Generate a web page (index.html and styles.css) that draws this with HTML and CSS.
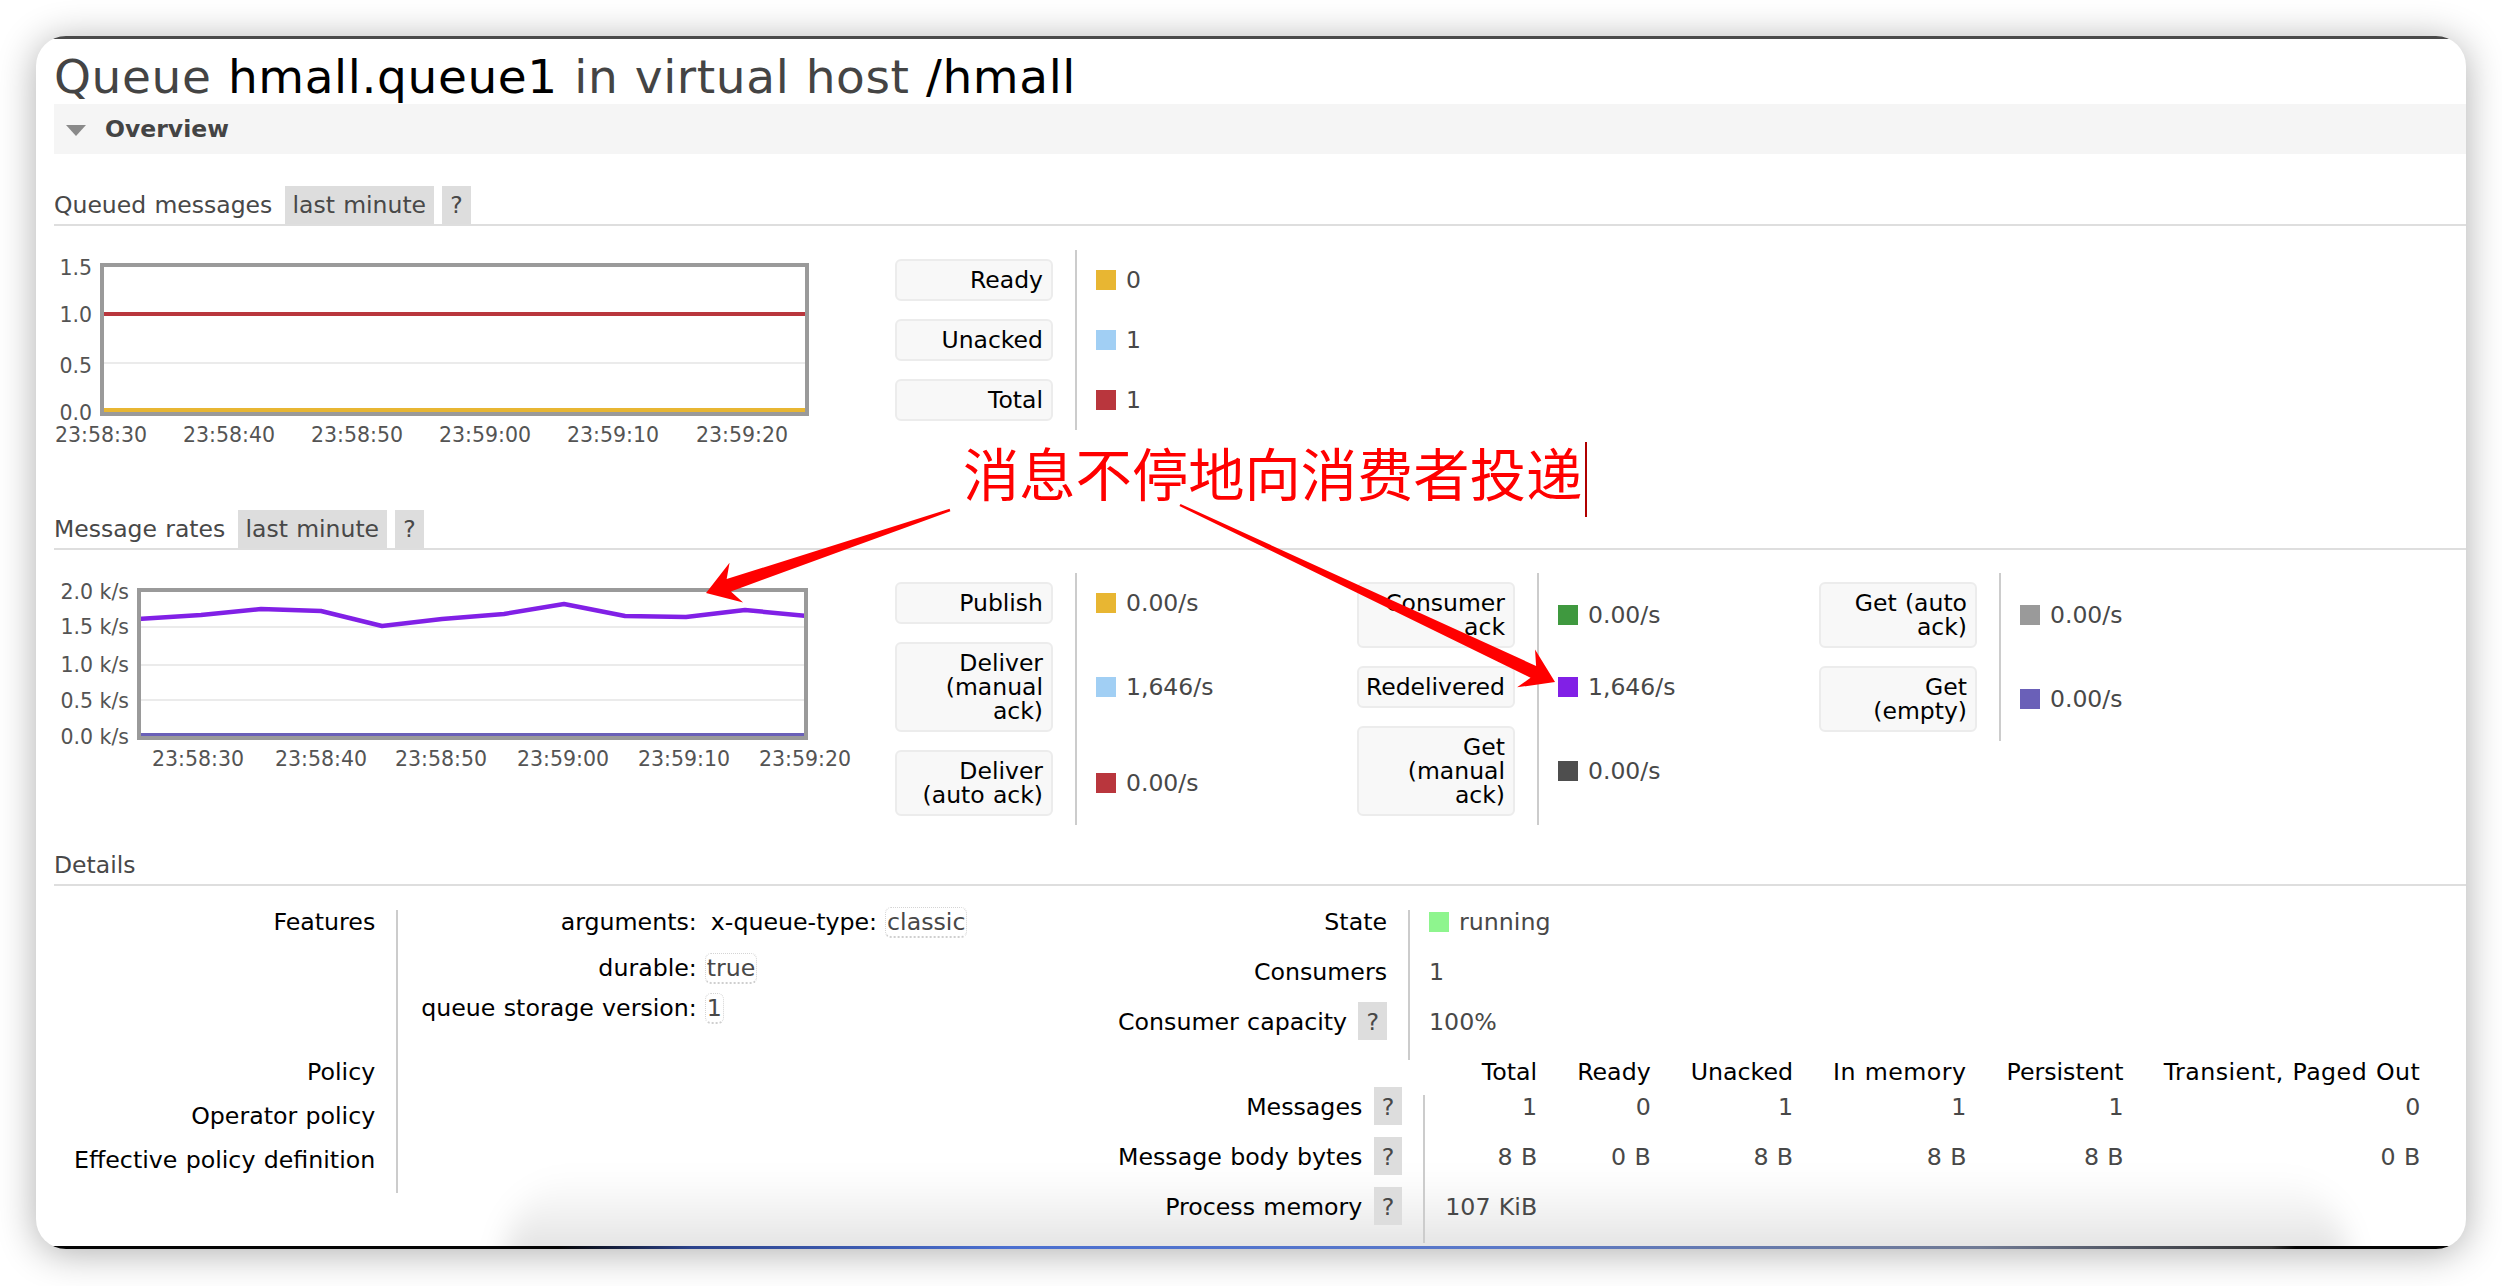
FILE: index.html
```html
<!DOCTYPE html>
<html>
<head>
<meta charset="utf-8">
<title>Queue hmall.queue1</title>
<link rel="stylesheet" href="styles.css">
</head>
<body>
<div class="window">
  <div class="blob"></div>
  <div class="win-top"></div>
  <div class="content">
    <h1>Queue <b>hmall.queue1</b> in virtual host <b>/hmall</b></h1>
    <div class="section-bar"><span class="tri"></span><span class="bar-title">Overview</span></div>

    <div class="chart-head head1">Queued messages <span class="opt">last minute</span> <span class="hq">?</span></div>
    <div class="chart-row row1">
      <svg class="chart" width="841" height="200" viewBox="0 0 841 200">
        <line class="grid" x1="50" y1="113" x2="751" y2="113"/>
        <line class="grid" x1="50" y1="64" x2="751" y2="64"/>
        <line class="ln s-ready" x1="50" y1="160" x2="751" y2="160"/>
        <line class="ln s-unacked" x1="50" y1="64" x2="751" y2="64"/>
        <line class="ln s-total" x1="50" y1="64" x2="751" y2="64"/>
        <rect class="frame" x="48" y="15" width="705" height="149"/>
        <g class="tick ytick">
          <text x="38" y="18">1.5</text>
          <text x="38" y="65">1.0</text>
          <text x="38" y="116">0.5</text>
          <text x="38" y="163">0.0</text>
        </g>
        <g class="tick xtick">
          <text x="47" y="185">23:58:30</text>
          <text x="175" y="185">23:58:40</text>
          <text x="303" y="185">23:58:50</text>
          <text x="431" y="185">23:59:00</text>
          <text x="559" y="185">23:59:10</text>
          <text x="688" y="185">23:59:20</text>
        </g>
      </svg>
      <div class="lg">
        <table class="legend">
          <tr><th><div class="lb">Ready</div></th><td><span class="sw c-ready"></span>0</td></tr>
          <tr><th><div class="lb">Unacked</div></th><td><span class="sw c-unacked"></span>1</td></tr>
          <tr><th><div class="lb">Total</div></th><td><span class="sw c-total"></span>1</td></tr>
        </table>
      </div>
    </div>

    <div class="chart-head head2">Message rates <span class="opt">last minute</span> <span class="hq">?</span></div>
    <div class="chart-row row2">
      <svg class="chart" width="841" height="200" viewBox="0 0 841 200">
        <line class="grid" x1="87" y1="54" x2="752" y2="54"/>
        <line class="grid" x1="87" y1="92" x2="752" y2="92"/>
        <line class="grid" x1="87" y1="127" x2="752" y2="127"/>
        <polyline class="ln s-redel" points="84,46 147,42 207,36 267,38 328,53 388,46 450,41 510,31 571,43 632,44 691,37 753,43"/>
        <line class="ln s-ready" x1="87" y1="162" x2="752" y2="162"/>
        <line class="ln s-gempty" x1="87" y1="162" x2="752" y2="162"/>
        <rect class="frame" x="85" y="17" width="667" height="148"/>
        <g class="tick ytick">
          <text x="75" y="19">2.0 k/s</text>
          <text x="75" y="54">1.5 k/s</text>
          <text x="75" y="92">1.0 k/s</text>
          <text x="75" y="128">0.5 k/s</text>
          <text x="75" y="164">0.0 k/s</text>
        </g>
        <g class="tick xtick">
          <text x="144" y="186">23:58:30</text>
          <text x="267" y="186">23:58:40</text>
          <text x="387" y="186">23:58:50</text>
          <text x="509" y="186">23:59:00</text>
          <text x="630" y="186">23:59:10</text>
          <text x="751" y="186">23:59:20</text>
        </g>
      </svg>
      <div class="lg">
        <table class="legend">
          <tr><th><div class="lb">Publish</div></th><td><span class="sw c-ready"></span>0.00/s</td></tr>
          <tr><th><div class="lb">Deliver<br>(manual<br>ack)</div></th><td><span class="sw c-unacked"></span>1,646/s</td></tr>
          <tr><th><div class="lb">Deliver<br>(auto ack)</div></th><td><span class="sw c-total"></span>0.00/s</td></tr>
        </table>
      </div>
      <div class="lg">
        <table class="legend">
          <tr><th><div class="lb">Consumer<br>ack</div></th><td><span class="sw c-cack"></span>0.00/s</td></tr>
          <tr><th><div class="lb">Redelivered</div></th><td><span class="sw c-redel"></span>1,646/s</td></tr>
          <tr><th><div class="lb">Get<br>(manual<br>ack)</div></th><td><span class="sw c-gman"></span>0.00/s</td></tr>
        </table>
      </div>
      <div class="lg">
        <table class="legend">
          <tr><th><div class="lb">Get (auto<br>ack)</div></th><td><span class="sw c-gauto"></span>0.00/s</td></tr>
          <tr><th><div class="lb">Get<br>(empty)</div></th><td><span class="sw c-gempty"></span>0.00/s</td></tr>
        </table>
      </div>
    </div>

    <div class="chart-head head3">Details</div>
    <div class="details">
      <div class="details-left">
        <table class="facts fl">
          <tr>
            <th>Features</th>
            <td>
              <table class="mini">
                <tr class="r1"><th>arguments:</th><td><table class="mini2"><tr><th>x-queue-type:</th><td><abbr>classic</abbr></td></tr></table></td></tr>
                <tr class="r2"><th>durable:</th><td><abbr>true</abbr></td></tr>
                <tr class="r3"><th>queue storage version:</th><td><abbr>1</abbr></td></tr>
              </table>
            </td>
          </tr>
          <tr><th>Policy</th><td></td></tr>
          <tr><th>Operator policy</th><td></td></tr>
          <tr><th>Effective policy definition</th><td></td></tr>
        </table>
      </div>
      <div class="details-right">
        <table class="facts fa">
          <tr><th>State</th><td><span class="sw c-running"></span>running</td></tr>
          <tr><th>Consumers</th><td>1</td></tr>
          <tr><th>Consumer capacity <span class="help">?</span></th><td>100%</td></tr>
        </table>
        <table class="facts fb">
          <tr class="hdr"><th></th><td>Total</td><td>Ready</td><td>Unacked</td><td class="wide">In memory</td><td>Persistent</td><td class="wide">Transient, Paged Out</td></tr>
          <tr><th>Messages <span class="help">?</span></th><td>1</td><td>0</td><td>1</td><td>1</td><td>1</td><td>0</td></tr>
          <tr><th>Message body bytes <span class="help">?</span></th><td>8 B</td><td>0 B</td><td>8 B</td><td>8 B</td><td>8 B</td><td>0 B</td></tr>
          <tr class="last"><th>Process memory <span class="help">?</span></th><td>107 KiB</td><td></td><td></td><td></td><td></td><td></td></tr>
        </table>
      </div>
    </div>
  </div>
  <div class="win-bottom"></div>
</div>

<div class="note">消息不停地向消费者投递</div>
<div class="caret"></div>
<svg class="arrows" width="2502" height="1286" viewBox="0 0 2502 1286">
  <polygon class="arrow" transform="translate(950 510) rotate(161.21)" points="0,-1.2 233.7,-6.5 225.7,-21 257.7,0 225.7,21 233.7,6.5 0,1.2"/>
  <polygon class="arrow" transform="translate(1180 505) rotate(25.27)" points="0,-1.2 390.7,-6.5 382.7,-21 414.7,0 382.7,21 390.7,6.5 0,1.2"/>
</svg>
</body>
</html>
```

FILE: styles.css
```css
* { box-sizing: border-box; }
html, body { margin: 0; padding: 0; }
body {
  width: 2502px;
  height: 1286px;
  overflow: hidden;
  position: relative;
  background: #fff;
  font-family: "DejaVu Sans", Verdana, sans-serif;
  font-size: 23.5px;
  line-height: 24px;
  word-spacing: 0.8px;
  color: #484848;
}

/* macOS style window */
.window {
  position: relative;
  margin: 36px 0 0 36px;
  width: 2430px;
  height: 1213px;
  border-radius: 30px;
  overflow: hidden;
  background: #fff;
  box-shadow: 0 4px 38px rgba(0, 0, 0, 0.32);
  display: flex;
  flex-direction: column;
}
.win-top { flex: none; height: 3px; background: #4a4a4a; position: relative; z-index: 2; }
.win-bottom {
  flex: none;
  height: 3px;
  position: relative;
  z-index: 2;
  background: linear-gradient(to right, #050505 0%, #050505 21.5%, #2c438c 27%, #4b6fd0 40%, #5a78c8 60%, #707a94 80%, #333 92%, #050505 93%, #050505 100%);
}
.blob {
  position: absolute;
  z-index: 0;
  left: 470px;
  top: 1138px;
  width: 1840px;
  height: 110px;
  border-radius: 80px 80px 0 0;
  background: linear-gradient(to bottom, rgba(0,0,0,0) 0%, rgba(0,0,0,0.06) 40%, rgba(0,0,0,0.16) 100%);
  filter: blur(14px);
}
.content {
  flex: 1;
  position: relative;
  z-index: 1;
  padding: 11px 0 0 18px;
  overflow: hidden;
}

h1 {
  margin: 0;
  font-size: 47px;
  line-height: 54px;
  font-weight: normal;
  letter-spacing: 0.62px;
  color: #444;
  white-space: nowrap;
}
h1 b { font-weight: normal; color: #000; }

.section-bar {
  height: 50px;
  background: #f5f5f5;
  display: flex;
  align-items: center;
}
.tri {
  width: 0;
  height: 0;
  margin: 2px 19px 0 12px;
  border-left: 10px solid transparent;
  border-right: 10px solid transparent;
  border-top: 11px solid #8a8a8a;
}
.bar-title { font-weight: bold; color: #444; }

.chart-head {
  height: 40px;
  line-height: 38px;
  border-bottom: 2px solid #dedede;
  white-space: nowrap;
  color: #484848;
}
.head1 { margin-top: 32px; }
.head2 { margin-top: 60px; }
.head3 { margin-top: 21px; }
.opt, .hq {
  display: inline-block;
  vertical-align: top;
  line-height: 38px;
  background: #dddddd;
  padding: 0 8px;
}
.opt { margin-left: 4px; }

.chart-row { display: flex; align-items: flex-start; }
.row1 { margin-top: 24px; }
.row2 { margin-top: 23px; }
.chart { flex: none; display: block; width: 841px; height: 200px; word-spacing: 0; }

.grid { stroke: #ebebeb; stroke-width: 2; }
.ln { fill: none; stroke-width: 4; stroke-linejoin: round; }
.s-ready { stroke: #e8b632; }
.s-unacked { stroke: #a1cff4; }
.s-total { stroke: #b9363d; }
.s-redel { stroke: #8120e6; stroke-width: 4.5; }
.s-gempty { stroke: #6a60b8; }
.frame { fill: none; stroke: #9a9a9a; stroke-width: 4; }
.tick text {
  font-family: "DejaVu Sans", Verdana, sans-serif;
  font-size: 20.5px;
  fill: #545454;
  dominant-baseline: central;
}
.ytick text { text-anchor: end; }
.xtick text { text-anchor: middle; }

.lg { flex: none; width: 462px; }
.legend { border-collapse: separate; border-spacing: 0; }
.legend th {
  padding: 9px 22px 9px 0;
  font-weight: normal;
  vertical-align: middle;
}
.lb {
  width: 158px;
  padding: 7px 8px 7px 4px;
  border: 2px solid #ececec;
  border-radius: 6px;
  background: #f8f8f8;
  text-align: right;
  color: #000;
  white-space: nowrap;
}
.legend td {
  border-left: 2px solid #cccccc;
  padding: 0 0 0 19px;
  vertical-align: middle;
  white-space: nowrap;
  color: #484848;
}

.sw {
  display: inline-block;
  width: 20px;
  height: 20px;
  margin-right: 10px;
  vertical-align: -2px;
}
.c-ready { background: #e8b632; }
.c-unacked { background: #a1cff4; }
.c-total { background: #b9363d; }
.c-cack { background: #3f993f; }
.c-redel { background: #8120e6; }
.c-gman { background: #4e4e4e; }
.c-gauto { background: #9a9a9a; }
.c-gempty { background: #6a60b8; }
.c-running { background: #8ef58e; }

/* details */
.details { display: flex; align-items: flex-start; margin-top: 24px; font-size: 23.7px; }
.details-left { flex: none; width: 1043px; }
.details-right { flex: none; }
.facts { border-collapse: separate; border-spacing: 0; }
.facts > tbody > tr > th {
  font-weight: normal;
  color: #000;
  text-align: right;
  vertical-align: top;
  white-space: nowrap;
  padding: 0 21px 20px 20px;
  border-right: 2px solid #cccccc;
}
.facts > tbody > tr > td {
  vertical-align: top;
  white-space: nowrap;
  padding: 0 21px 20px 21px;
}
.fl > tbody > tr:last-child > * { padding-bottom: 21px; }

.mini, .mini2 { border-collapse: collapse; }
.mini th {
  font-weight: normal;
  color: #000;
  text-align: right;
  vertical-align: top;
  white-space: nowrap;
  padding: 0 8px 0 2px;
}
.mini td { padding: 0; vertical-align: top; white-space: nowrap; }
.mini2 th { padding: 0 8px 0 6px; }
.mini > tbody > tr.r1 > * { padding-bottom: 22px; }
.mini > tbody > tr.r2 > * { padding-bottom: 16px; }
.mini > tbody > tr.r3 > * { padding-bottom: 20px; }
abbr {
  text-decoration: none;
  border: 1px dotted #d4d4d4;
  border-bottom: 2px dotted #cfcfcf;
  border-radius: 6px;
  padding: 0 1px;
  color: #484848;
}

.fa > tbody > tr > th,
.fb > tbody > tr > th { padding: 0 21px 26px 21px; }
.fa > tbody > tr > td { padding: 0 20px 26px 19px; color: #484848; }
.fb > tbody > tr > td { padding: 0 20px 26px 20px; text-align: right; color: #484848; }
.fb > tbody > tr.hdr > th { border-right: none; padding-bottom: 11px; }
.fb > tbody > tr.hdr > td { padding-bottom: 11px; color: #000; }
.fb > tbody > tr.hdr > td.wide { letter-spacing: 0.45px; }
.fb > tbody > tr.last > * { padding-bottom: 24px; }
.help {
  background: #dddddd;
  padding: 6px 8px 4px;
  margin-left: 3px;
  color: #484848;
}

/* annotation overlay */
.note {
  position: absolute;
  left: 963px;
  top: 444px;
  z-index: 10;
  font-family: "Noto Sans CJK SC", "Noto Sans CJK JP", sans-serif;
  font-size: 56.3px;
  line-height: 56px;
  word-spacing: 0;
  color: #ff0000;
  white-space: nowrap;
}
.caret {
  position: absolute;
  left: 1585px;
  top: 442px;
  width: 2px;
  height: 75px;
  z-index: 10;
  background: #b00000;
}
.arrows {
  position: absolute;
  left: 0;
  top: 0;
  z-index: 11;
  pointer-events: none;
}
.arrow { fill: #ff0000; }
```
